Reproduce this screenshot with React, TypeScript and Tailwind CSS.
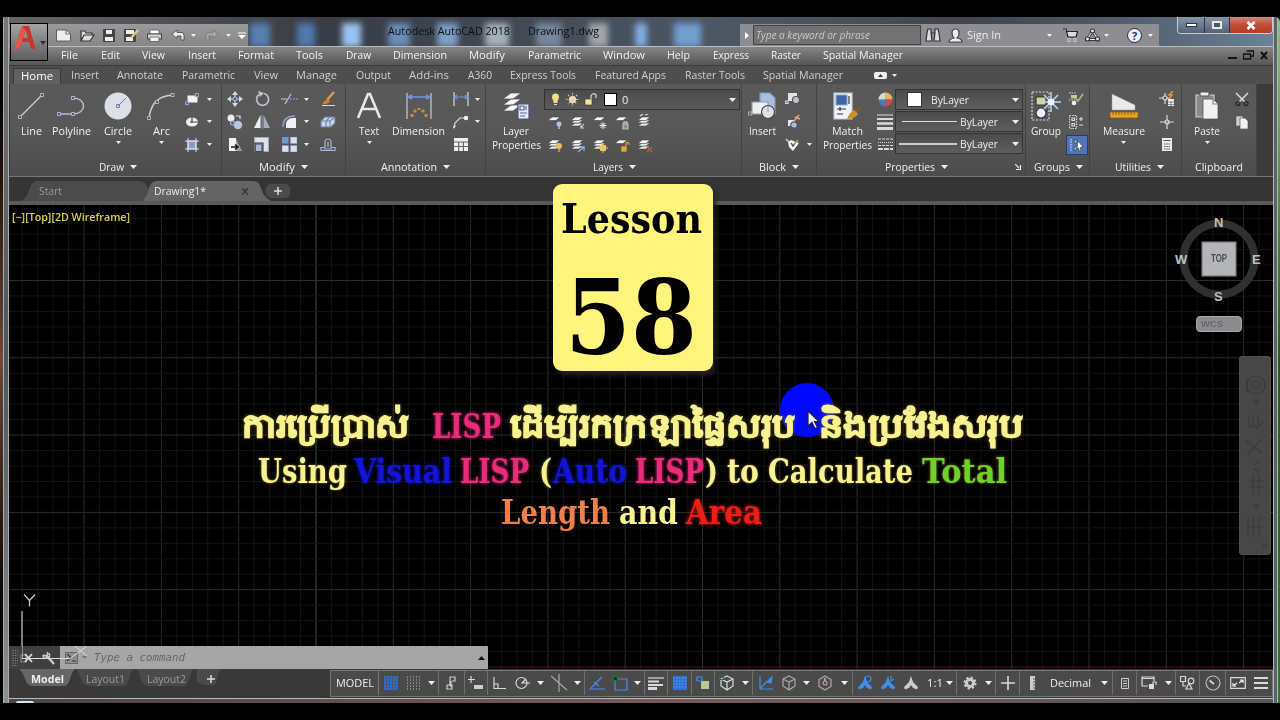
import { useLayoutEffect, useRef, useState } from "react";
import type { ReactNode } from "react";

type Box = { className?: string; children?: ReactNode };

// Squeezes or stretches one line of text to the width of its box
function Fit({ className = "", children }: Box) {
    const box = useRef<HTMLSpanElement>(null);
    const text = useRef<HTMLSpanElement>(null);
    const [scale, setScale] = useState(1);

    useLayoutEffect(() => {
        if (box.current && text.current && text.current.offsetWidth > 0) {
            setScale(box.current.clientWidth / text.current.getBoundingClientRect().width);
        }
    }, []);

    return (
        <span ref={box} className={`block shrink-0 whitespace-nowrap ${className}`}>
            <span ref={text} className="inline-block origin-left" style={{ transform: `scaleX(${scale})` }}>
                {children}
            </span>
        </span>
    );
}

function Svg({ w = 18, h = 18, children }: { w?: number; h?: number; children: ReactNode }) {
    return (
        <svg width={w} height={h} viewBox={`0 0 ${w} ${h}`} fill="none" stroke="#d8dade" strokeWidth="1.2" className="block shrink-0">
            {children}
        </svg>
    );
}

function Caret({ small = false }: { small?: boolean }) {
    return small ? (
        <Svg w={5} h={3}><path d="M0 0h5L2.5 3z" fill="#eee" stroke="none" /></Svg>
    ) : (
        <Svg w={7} h={4}><path d="M0 0h7L3.5 4z" fill="#eee" stroke="none" /></Svg>
    );
}

const menus = [
    ["File", "w-[17px]"], ["Edit", "w-[19px]"], ["View", "w-[23px]"], ["Insert", "w-[27.5px]"],
    ["Format", "w-[36px]"], ["Tools", "w-[27px]"], ["Draw", "w-[25px]"], ["Dimension", "w-[53.5px]"],
    ["Modify", "w-[36px]"], ["Parametric", "w-[53px]"], ["Window", "w-[41.5px]"], ["Help", "w-[23px]"],
    ["Express", "w-[35.5px]"], ["Raster", "w-[30px]"], ["Spatial Manager", "w-[80px]"],
];

const tabs = [
    ["Insert", "w-[27.5px]"], ["Annotate", "w-[46px]"], ["Parametric", "w-[53px]"], ["View", "w-[24px]"],
    ["Manage", "w-[40.5px]"], ["Output", "w-[35px]"], ["Add-ins", "w-[39.5px]"], ["A360", "w-[24px]"],
    ["Express Tools", "w-[66px]"], ["Featured Apps", "w-[71px]"], ["Raster Tools", "w-[60px]"],
    ["Spatial Manager", "w-[80px]"],
];

function Panel({ title, tw, className = "", children, arrow = true, launcher = false }: Box & { title: string; tw: string; arrow?: boolean; launcher?: boolean }) {
    return (
        <div className={`relative flex h-full shrink-0 flex-col border-r border-[#434343] bg-linear-to-b from-[#595959] via-[#585858] to-[#4c4c4c] ${className}`}>
            <div className="flex h-[73px] pt-[4px]">{children}</div>
            <div className={`flex h-[19px] items-center justify-center gap-[6px] text-[#f0f0f0] ${launcher ? "pr-3" : ""}`}>
                <Fit className={tw}>{title}</Fit>
                {arrow && <Caret />}
            </div>
            {launcher && (
                <span className="absolute right-[4px] bottom-[6px]">
                    <Svg w={6} h={6}><path d="M0 0l4 4M5.500 1v4.500H1" stroke="#eee" /></Svg>
                </span>
            )}
        </div>
    );
}

function Big({ className, icon, children, caret = false }: Box & { icon: ReactNode; caret?: boolean }) {
    return (
        <div className={`flex shrink-0 flex-col items-center ${className}`}>
            <div className="flex h-[36px] items-center justify-center">{icon}</div>
            <div className="flex flex-col items-center text-[#f0f0f0] leading-[14px]">{children}</div>
            {caret && <div className="mt-[3px]"><Caret small /></div>}
        </div>
    );
}

function Col({ className, children }: Box) {
    return <div className={`grid h-[68px] shrink-0 grid-rows-3 place-items-center ${className}`}>{children}</div>;
}

// Stack of sheets used by every layer tool
function Sheets({ n = 2, children }: { n?: number; children?: ReactNode }) {
    return (
        <Svg w={16} h={16}>
            {n > 2 && <path d="M5 9h8l-4 3H1z" fill="#eee" stroke="#444" strokeWidth=".6" />}
            {n > 1 && <path d="M5 6h8l-4 3H1z" fill="#eee" stroke="#444" strokeWidth=".6" />}
            <path d="M5 3h8L9 6.500H1z" fill="#f7f7f7" stroke="#444" strokeWidth=".6" />
            {children}
        </Svg>
    );
}

function DrawPanel() {
    return (
        <Panel title="Draw" tw="w-[25px]" className="w-[212px] pl-[4px]">
            <Big className="w-[34px]" icon={<Svg w={28} h={28}><path d="M3 25L25 3" stroke="#ccc" /><path d="M1.500 23.500h3v3h-3zM23.500 1.500h3v3h-3z" stroke="#a9b6dc" fill="#555" strokeWidth="1" /></Svg>}>
                <Fit className="w-[21px]">Line</Fit>
            </Big>
            <Big className="w-[46px]" icon={<Svg w={30} h={24}><path d="M17 4c14 0 14 16 0 16H3" stroke="#bbb" strokeWidth="1.500" /><path d="M15.500 2.500h3v3h-3zM15.500 18.500h3v3h-3zM1.500 18.500h3v3h-3z" stroke="#a9b6dc" fill="#555" strokeWidth="1" /></Svg>}>
                <Fit className="w-[39px]">Polyline</Fit>
            </Big>
            <Big className="w-[48px]" caret icon={
                <Svg w={28} h={28}><circle cx="14" cy="14" r="13.500" fill="#dcdfe6" stroke="none" /><path d="M14 14l8-8M12.500 12.500h3v3h-3z" stroke="#6b82b8" strokeWidth="1" /></Svg>
            }>
                <Fit className="w-[28px]">Circle</Fit>
            </Big>
            <Big className="w-[38px]" caret icon={<Svg w={28} h={28}><path d="M2 26C4 12 10 4 26 3" stroke="#ccc" strokeWidth="1.500" /><path d="M.5 24.500h3v3h-3zM8.500 8.500h3v3h-3zM24 1.500h3v3h-3z" stroke="#a9b6dc" fill="#555" strokeWidth="1" /></Svg>}>
                <Fit className="w-[17px]">Arc</Fit>
            </Big>
            <Col className="w-[24px]">
                <Svg w={14} h={12}><path d="M2.500 2.500h10v7h-10z" fill="#f2f2f2" stroke="none" /><path d="M.5 9h3v2.500h-3zM10.500.500h3v3h-3z" stroke="#8fa3d8" fill="#555" /></Svg>
                <Svg w={14} h={10}><ellipse cx="7" cy="5" rx="6" ry="4.500" fill="#eef0f4" stroke="none" /><path d="M7 0v6M5 5h8" stroke="#445" /></Svg>
                <Svg w={14} h={14}><path d="M3 3h8v8H3z" fill="#8d9cc7" stroke="#c4ccec" /><path d="M0 3h14M0 11h14M3 0v14M11 0v14" stroke="#dfe2f0" strokeWidth="1" /></Svg>
            </Col>
            <Col className="w-[10px]"><Caret small /><Caret small /><Caret small /></Col>
        </Panel>
    );
}

function ModifyPanel() {
    return (
        <Panel title="Modify" tw="w-[36px]" className="w-[124px]">
            <Col className="w-[26px]">
                <Svg w={16} h={16}><path d="M8 1v14M1 8h14" stroke="#d6dae6" /><path d="M8 0l3 4H5zM8 16l3-4H5zM0 8l4-3v6zM16 8l-4-3v6z" fill="#d6dae6" stroke="none" /><path d="M6.500 6.500h3v3h-3z" fill="#555" stroke="#8fa3d8" /></Svg>
                <Svg w={16} h={16}><circle cx="4" cy="4" r="3.500" fill="#eee" stroke="none" /><circle cx="11" cy="11" r="4.200" fill="#bcc6e2" stroke="none" /><circle cx="5.500" cy="9" r="2" stroke="#9fb0de" /><path d="M9 2h4v3" /></Svg>
                <Svg w={16} h={16}><path d="M2 1h7v13H2z" fill="#f2f2f2" stroke="none" /><path d="M9 2l6 12H9z" fill="#9b9fa8" stroke="none" /><path d="M4 10h7M8 7.500l3 2.500-3 2.500" stroke="#111" strokeWidth="1.500" /></Svg>
            </Col>
            <Col className="w-[27px]">
                <Svg w={16} h={16}><path d="M5 3.500a6 6 0 1 0 5-1" stroke="#c0c4cc" strokeWidth="1.600" /><path d="M4 0l6 2-4 4z" fill="#c0c4cc" stroke="none" /></Svg>
                <Svg w={16} h={14}><path d="M6.500 0v13H0z" fill="#f0f0f0" stroke="none" /><path d="M9.500 0v13H16z" fill="#a8acb4" stroke="none" /><path d="M8 0v14" stroke="#90a4d8" strokeWidth=".8" /></Svg>
                <Svg w={15} h={15}><path d="M.5.500h14v14H.5z" fill="#dfe3ee" stroke="#aab" /><path d="M1 6h8v8.500H1z" fill="#777d8c" stroke="#444" /><path d="M2 8h5v6H2z" fill="#aab8dc" stroke="none" /></Svg>
            </Col>
            <Col className="w-[29px]">
                <Svg w={18} h={14}><path d="M0 7h6M4 12L10 2" stroke="#b8c8f0" /><path d="M9 7h9" stroke="#8da4d6" strokeDasharray="2 1" /></Svg>
                <Svg w={16} h={14}><path d="M4 13V8q2-5 7-5h3v10z" fill="#f0f0f0" stroke="none" /><path d="M1 12Q1 1 13 1" stroke="#8da4d6" strokeWidth="1.500" /></Svg>
                <Svg w={15} h={15}><path d="M0 0h6.500v6.500H0z" fill="#7396d6" stroke="none" /><path d="M8.500 0H15v6.500H8.500zM0 8.500h6.500V15H0zM8.500 8.500H15V15H8.500z" fill="#d6e0f2" stroke="#8aa3cf" strokeWidth=".6" /></Svg>
            </Col>
            <Col className="w-[5px]"><Caret small /><Caret small /><Caret small /></Col>
            <Col className="w-[37px]">
                <Svg w={16} h={16}><path d="M14 1L7 9" stroke="#d6a35c" strokeWidth="2.200" /><path d="M8 8q-3 1-6 5 5 1 8-3z" fill="#e87b24" stroke="none" /><path d="M2 14.500h13" /></Svg>
                <Svg w={16} h={14}><path d="M1 6l4-4h10v6l-4 4H1z" fill="#cdd7ea" stroke="#6d7da0" /><path d="M1 6h9v6M10 6l5-4M6 6v6M6 6l4-4" stroke="#6d86b4" /></Svg>
                <Svg w={16} h={14}><path d="M1 12.500h14v-3h-4V4a3 3 0 0 0-6 0v5.500H1z" stroke="#a9b8d8" /><path d="M4 11h8M8 4v5" stroke="#a9b8d8" /></Svg>
            </Col>
        </Panel>
    );
}

function AnnotationPanel() {
    return (
        <Panel title="Annotation" tw="w-[56px]" className="w-[140px]">
            <Big className="w-[46px]" caret icon={<Svg w={26} h={28}><path d="M2 26L12 2h2l10 24M6 17h14" stroke="#e8e8e8" strokeWidth="2.600" /></Svg>}>
                <Fit className="w-[20px]">Text</Fit>
            </Big>
            <Big className="w-[53px]" icon={
                <Svg w={28} h={28}>
                    <path d="M2 1v26M26 1v26" stroke="#ccc" /><path d="M3 5h22M7 3L3 5l4 2M21 3l4 2-4 2" stroke="#6f93e4" strokeWidth="1.500" />
                    <path d="M7 25v-3M9 20l2-2M14 18v-2M17 18l2 2M21 22v3" stroke="#c98f2e" strokeWidth="3" />
                </Svg>
            }>
                <Fit className="w-[53px]">Dimension</Fit>
            </Big>
            <Col className="ml-[4px] w-[24px]">
                <Svg w={16} h={14}><path d="M1 0v14M15 0v14" /><path d="M1 5h14M4 3L1 5l3 2M12 3l3 2-3 2" stroke="#7896dc" /></Svg>
                <Svg w={16} h={14}><path d="M1 13l1-5 5-5h4" /><path d="M0 14l1-4 2 1z" fill="#eee" stroke="none" /><circle cx="13" cy="3" r="2.300" fill="#eee" stroke="none" /></Svg>
                <Svg w={14} h={13}><path d="M0 0h14v13H0z" fill="#eee" stroke="none" /><path d="M0 4h14M0 8.500h14M4.700 4v9M9.400 4v9" stroke="#666" /></Svg>
            </Col>
            <Col className="w-[9px]"><Caret small /><Caret small /></Col>
        </Panel>
    );
}

function LayersPanel() {
    return (
        <Panel title="Layers" tw="w-[30px]" className="w-[256px] pl-[2px]">
            <Big className="w-[56px]" icon={
                <Svg w={28} h={30}>
                    <path d="M9 14h10l-8 6H1zM9 8h10l-8 6H1zM9 2h10l-8 6H1z" fill="#f4f4f4" stroke="#555" strokeWidth=".7" />
                    <path d="M16 13h11v15H16z" fill="#e8ebf4" stroke="#47537a" /><path d="M18 15h4v4h-4zM24 15v4M18 22h7M18 25h5" stroke="#5165a0" />
                </Svg>
            }>
                <Fit className="w-[26px]">Layer</Fit>
                <Fit className="w-[49px]">Properties</Fit>
            </Big>
            <div className="flex flex-col">
                <div className="mt-[1px] flex h-[21px] w-[196px] items-center gap-[5.500px] border border-[#333] bg-linear-to-b from-[#4b4b4b] to-[#5a5a5a] pr-[3px] pl-[6px] text-[#e8e8e8]">
                    <Svg w={9} h={13}><path d="M1 4a3.500 3.500 0 1 1 7 0Q8 6 6.500 8v2h-4V8Q1 6 1 4z" fill="#f6dc86" stroke="none" /><path d="M3 11.500h3" /></Svg>
                    <Svg w={13} h={13}><circle cx="6.500" cy="6.500" r="3.500" fill="#f5ead2" stroke="none" /><path d="M6.500 0v13M0 6.500h13M2 2l9 9M11 2l-9 9" stroke="#e2c9a2" strokeDasharray="1.500 1" /></Svg>
                    <Svg w={14} h={13}><path d="M1 6h7v6H1z" fill="#efe59a" stroke="#333" strokeWidth=".6" /><path d="M7 6V3q2-4 5-1v3" /></Svg>
                    <span className="h-[13px] w-[13px] border border-black bg-white" />
                    <span className="flex-1">0</span>
                    <Caret />
                </div>
                <div className="grid h-[46px] w-[112px] grid-cols-5 grid-rows-2 place-items-center">
                    <Sheets n={1}><circle cx="12" cy="10" r="2.500" fill="#a9c5ee" stroke="none" /><path d="M12 12v3" /></Sheets>
                    <Sheets n={3}><path d="M14 10l-3 4M11 11v3h3" stroke="#b9cdf3" /></Sheets>
                    <Sheets n={1}><path d="M11 8v7M7.500 11.500h7M8.500 9l5 5M13.500 9l-5 5" stroke="#eee" strokeWidth="1" /></Sheets>
                    <Sheets n={1}><path d="M9 10h5v5H9z" fill="#8a8e98" stroke="#bbb" /><path d="M10 10V8h3v2" /></Sheets>
                    <Sheets n={3}><path d="M3 2l3-2M8 1l3-1" /></Sheets>
                    <Sheets n={3}><circle cx="12" cy="9" r="3" fill="#e9bc5c" stroke="none" /><path d="M12 11v4" stroke="#e9bc5c" /></Sheets>
                    <Sheets n={3}><path d="M8 15l6-5M10 10h4v4" stroke="#8fb0ee" strokeWidth="1.300" /></Sheets>
                    <Sheets n={3}><circle cx="11" cy="11" r="3.200" fill="#f2cf73" stroke="none" /><path d="M11 6v10M6 11h10M8 8l6 6M14 8l-6 6" stroke="#e8c364" strokeWidth="1" /></Sheets>
                    <Sheets n={1}><path d="M7 9h6v6H7z" fill="#e3a836" stroke="#6b4c10" strokeWidth=".6" /><path d="M12 9V6q3-2 3 2" stroke="#e3a836" /></Sheets>
                    <Sheets n={3}><path d="M10 10l5 5M15 10l-5 5" stroke="#b06236" strokeWidth="1.400" /></Sheets>
                </div>
            </div>
        </Panel>
    );
}

function BlockPanel() {
    return (
        <Panel title="Block" tw="w-[27px]" className="w-[75px]">
            <Big className="w-[40px]" icon={
                <Svg w={28} h={28}>
                    <path d="M12 1h10l5 5v16H12z" fill="#a8bede" stroke="#8297b8" /><path d="M4 10h16v12H4z" fill="#edeff5" stroke="#999" />
                    <circle cx="20" cy="20" r="6.500" fill="#dfe1e7" stroke="#444" /><path d="M20 14v6M.500 20h3v3h-3z" stroke="#aaa" />
                </Svg>
            }>
                <Fit className="w-[27px]">Insert</Fit>
            </Big>
            <Col className="w-[21px]">
                <Svg w={16} h={14}><path d="M3 1h9v8H3z" fill="#e2e4ea" stroke="none" /><circle cx="11" cy="8" r="3.500" fill="#bfc4ce" stroke="#555" /><path d="M.5 9h2.500v2.500H.5z" /></Svg>
                <Svg w={16} h={16}><path d="M3 6h7v6H3z" fill="#e2e4ea" stroke="none" /><circle cx="9" cy="11" r="3.200" fill="#aebfe0" stroke="#555" /><path d="M9 7l5-6M10 3l5 2" stroke="#dcb066" strokeWidth="1.600" /></Svg>
                <Svg w={16} h={14}><path d="M3 4l3-2 8 3-6 8-4-4z" fill="#f3f3f3" stroke="none" /><path d="M6 5l2 3 4-6" stroke="#444" strokeWidth="1.300" /><path d="M9 6l4-4" stroke="#c9a264" strokeWidth="1.500" /><path d="M1 1l3 3" /></Svg>
            </Col>
            <Col className="w-[12px]"><span /><span /><Caret small /></Col>
        </Panel>
    );
}

function Combo({ children, thick = false, swatch = false }: { children: string; thick?: boolean; swatch?: boolean }) {
    return (
        <div className="flex h-[21px] w-[128px] items-center border border-[#333] bg-linear-to-b from-[#4b4b4b] to-[#5e5e5e] pr-[3px] pl-[3px] text-[#eee]">
            {swatch ? (
                <span className="mr-[9px] ml-[8px] h-[15px] w-[15px] border border-[#333] bg-white" />
            ) : thick ? (
                <span className="mr-[3px] h-[2px] w-[58px] bg-[#ccc]" />
            ) : (
                <span className="mr-[3px] ml-[3px] h-px w-[55px] bg-[#ddd]" />
            )}
            <Fit className="w-[38px]">{children}</Fit>
            <span className="ml-auto"><Caret /></span>
        </div>
    );
}

function PropertiesPanel() {
    return (
        <Panel title="Properties" tw="w-[50px]" className="w-[209px] pl-[2px]" launcher>
            <Big className="w-[56px]" icon={
                <Svg w={28} h={28}>
                    <path d="M1 1h18v26H1z" fill="#f1f3f8" stroke="#c4cad8" /><path d="M3 3h11v10H3z" fill="#3b66a4" stroke="#8ea6cf" /><path d="M16 4v8M4 17h9M4 22h6M7 15v4" stroke="#333" />
                    <path d="M27 15l-6 7" stroke="#8a5a20" strokeWidth="2.500" /><path d="M21 18l4 4q-3 5-11 5 2-6 7-9z" fill="#cf8d35" stroke="none" />
                </Svg>
            }>
                <Fit className="w-[31px]">Match</Fit>
                <Fit className="w-[49px]">Properties</Fit>
            </Big>
            <Col className="w-[20px]">
                <Svg w={15} h={15}>
                    <path d="M7.500 7.500V.500a7 7 0 0 1 7 7z" fill="#f0b357" stroke="none" /><path d="M7.500 7.500h7a7 7 0 0 1-7 7z" fill="#d64a3c" stroke="none" />
                    <path d="M7.500 7.500v7a7 7 0 0 1-7-7z" fill="#4a78c8" stroke="none" /><path d="M7.500 7.500h-7a7 7 0 0 1 7-7z" fill="#cfe0c8" stroke="none" />
                </Svg>
                <Svg w={16} h={16}><path d="M0 1h16" strokeWidth="1" /><path d="M0 5h16" strokeWidth="2" /><path d="M0 9.500h16" strokeWidth="2.500" /><path d="M0 14.500h16" strokeWidth="3" /></Svg>
                <Svg w={15} h={13}><path d="M0 1h15M0 7.500h15" strokeDasharray="3 1" /><path d="M0 4.500h15" strokeDasharray="1 1" /><path d="M0 11h15" strokeDasharray="5 1" strokeWidth="2" /></Svg>
            </Col>
            <div className="flex flex-col gap-[1px] pt-[1px]">
                <Combo swatch>ByLayer</Combo>
                <Combo>ByLayer</Combo>
                <Combo thick>ByLayer</Combo>
            </div>
        </Panel>
    );
}

function GroupsPanel() {
    return (
        <Panel title="Groups" tw="w-[36px]" className="w-[64px] pl-[1px]">
            <Big className="w-[38px]" icon={
                <Svg w={30} h={30}>
                    <path d="M1 1h17v28H1z" strokeDasharray="2 1.500" /><path d="M5 6h10v8H5z" fill="#d4d49a" stroke="#333" /><circle cx="10" cy="22" r="5" fill="#eef" stroke="#333" />
                    <path d="M20 1v20M10 11h20M13 4l14 14M27 4L13 18" stroke="#b9d6f6" strokeWidth="1.500" /><circle cx="20" cy="11" r="3.500" fill="#e6f3ff" stroke="none" />
                </Svg>
            }>
                <Fit className="w-[30px]">Group</Fit>
            </Big>
            <Col className="w-[23px]">
                <Svg w={15} h={14}><path d="M0 1h7M0 8h7" strokeDasharray="1.500 1" /><path d="M2 3h6v3.500H2z" fill="#c9cd94" stroke="none" /><path d="M7 7l2 2 5-7" stroke="#b9bc7a" strokeWidth="1.500" /><circle cx="5" cy="11" r="2.300" fill="#eee" stroke="none" /></Svg>
                <Svg w={15} h={14}><path d="M.5.500h7v13h-7z" strokeDasharray="1.500 1" /><path d="M3 3h2.500v2.500H3zM3 8.500h2.500V11H3z" /><path d="M10 4h4M12 2v4M10 10h4" /></Svg>
                <span className="grid h-[20px] w-[22px] place-items-center border border-[#233d78] bg-[#5275b5]">
                    <Svg w={14} h={14}><path d="M1 1v12" strokeDasharray="1.500 1" /><path d="M4 2h3v3H4zM4 9h3v3H4z" fill="#9ed0b0" stroke="#244" strokeWidth=".7" /><path d="M8 3l5 6-3 .500 1 3-1.500.500-1-3L7 11z" fill="#fff" stroke="#222" strokeWidth=".5" /></Svg>
                </span>
            </Col>
        </Panel>
    );
}

function UtilitiesPanel() {
    return (
        <Panel title="Utilities" tw="w-[36px]" className="w-[92px] pl-[7px]">
            <Big className="w-[53px]" caret icon={
                <Svg w={30} h={28}>
                    <path d="M3 2l23 11v5H3z" fill="#eaeaec" stroke="#999" strokeWidth=".5" /><path d="M1 20h28v6H1z" fill="#e2a22c" stroke="#80570e" strokeWidth=".7" />
                    <path d="M4 20v3M7 20v3M10 20v3M13 20v3M16 20v3M19 20v3M22 20v3M25 20v3" stroke="#80570e" strokeWidth=".8" />
                </Svg>
            }>
                <Fit className="w-[42px]">Measure</Fit>
            </Big>
            <Col className="ml-[5px] w-[24px]">
                <Svg w={16} h={16}><path d="M6 2v11M0 7h11" /><circle cx="6" cy="7" r="2" fill="#555" /><path d="M14 0l-4 4h3l-3 4" stroke="#e89538" strokeWidth="1.500" /><path d="M9 8h6v7H9z" fill="#eee" stroke="none" /><path d="M9 11h6M9 13.500h6M12 10v5" stroke="#666" strokeWidth=".7" /></Svg>
                <Svg w={14} h={14}><path d="M7 0v14M0 7h14" /><circle cx="7" cy="7" r="2" fill="#888" stroke="#ddd" /></Svg>
                <Svg w={10} h={13}><path d="M0 0h10v13H0z" fill="#ececec" stroke="none" /><path d="M1.500 2.500h7" stroke="#555" /><path d="M2 6h6M2 8.500h6M2 11h6" stroke="#555" strokeDasharray="1.500 .8" /></Svg>
            </Col>
        </Panel>
    );
}

function ClipboardPanel() {
    return (
        <Panel title="Clipboard" tw="w-[48px]" className="w-[75px]" arrow={false}>
            <Big className="ml-[3px] w-[44px]" caret icon={
                <Svg w={26} h={30}>
                    <path d="M2 4h18v22H2z" fill="#8a8a8a" stroke="#ccc" /><path d="M6 1h9v4H6z" fill="#eee" stroke="#555" />
                    <path d="M9 8h10l5 5v15H9z" fill="#f2f2f2" stroke="#555" strokeWidth=".8" /><path d="M19 8v5h5" stroke="#888" />
                </Svg>
            }>
                <Fit className="w-[26px]">Paste</Fit>
            </Big>
            <Col className="ml-[2px] w-[22px]">
                <Svg w={14} h={14}><path d="M1 1l9 9M13 1l-9 9" stroke="#ddd" strokeWidth="1.500" /><circle cx="3" cy="11.500" r="2" stroke="#222" /><circle cx="11" cy="11.500" r="2" stroke="#222" /></Svg>
                <Svg w={14} h={14}><path d="M1 1h7v10H1z" fill="#cfcfcf" stroke="#444" strokeWidth=".5" /><path d="M5 3h5l3 3v8H5z" fill="#f2f2f2" stroke="#444" strokeWidth=".6" /></Svg>
                <span />
            </Col>
        </Panel>
    );
}

function TitleBar() {
    return (
        <div className="relative flex h-[29px] items-end bg-linear-to-r from-[#666] via-[#383c45] via-25% to-[#6b8298]">
            {/* desktop showing through the glass */}
            <div className="absolute inset-x-0 top-0 h-[29px] overflow-hidden bg-linear-to-r from-transparent from-55% via-[#40444c] via-75% to-transparent">
                <div className="flex gap-[27px] pt-[6px] pl-[241px] blur-[3px]">
                    <span className="h-6 w-[20px] bg-[#5680b0]" />
                    <span className="h-6 w-[18px] bg-[#4f79ae]" />
                    <span className="h-6 w-[19px] bg-[#9cc3f3]" />
                    <span className="h-6 w-[22px] bg-[#6b8db9]" />
                    <span className="h-6 w-[21px] bg-[#7f9fc6]" />
                    <span className="h-6 w-[24px] bg-[#a5b1b9]" />
                    <span className="h-6 w-[26px] bg-[#77879c]" />
                    <span className="h-6 w-[19px] bg-[#a3a7ab]" />
                    <span className="h-6 w-[12px] bg-[#82aee4]" />
                    <span className="h-6 w-[27px] bg-[#719ed0]" />
                </div>
            </div>
            <div className="relative flex h-[22px] w-[239px] items-center gap-[8.500px] bg-linear-to-b from-[#9a9a9a] to-[#878787] pl-[47px]">
                <Svg w={15} h={13}><path d="M.5 1h10l4 4v7H.5z" fill="#eee" stroke="#444" strokeWidth=".8" /><path d="M10 1v4h4" stroke="#777" /></Svg>
                <Svg w={15} h={13}><path d="M1 12V2h4l1 2h6v2M1 12l3-6h10l-4 6z" fill="#ddd" stroke="#333" /></Svg>
                <Svg w={12} h={13}><path d="M0 0h12v13H0z" fill="#444" stroke="none" /><path d="M3 1h6v4H3zM2 8h8v4H2z" fill="#eee" stroke="none" /></Svg>
                <Svg w={15} h={13}><path d="M0 0h12v13H0z" fill="#444" stroke="none" /><path d="M2 1h8v4H2zM2 8h7v4H2z" fill="#eee" stroke="none" /><path d="M14 1L7 9" stroke="#e2c67e" strokeWidth="2.500" /></Svg>
                <Svg w={15} h={13}><path d="M3 1h9v4H3z" fill="#fff" stroke="#555" strokeWidth=".8" /><path d="M.5 5h14v5H.5z" fill="#ddd" stroke="#444" /><path d="M3 8h9v4.500H3z" fill="#f4f4f4" stroke="#555" strokeWidth=".8" /></Svg>
                <Svg w={14} h={12}><path d="M1 5l5-4v2.500h5q2 0 2 3V11h-3V7H6v2.500z" fill="#ececec" stroke="#444" strokeWidth=".8" /></Svg>
                <span className="-ml-[2px]"><Caret small /></span>
                <Svg w={14} h={12}><path d="M13 5L8 1v2.500H3q-2 0-2 3V11h3V7h4v2.500z" fill="#a5a5a5" stroke="#777" strokeWidth=".8" /></Svg>
                <span className="-ml-[1px]"><Caret small /></span>
                <span className="-ml-[2px]"><Svg w={8} h={7}><path d="M0 1h8" stroke="#fff" /><path d="M0 3h8L4 7z" fill="#fff" stroke="none" /></Svg></span>
            </div>
            <div className="relative flex h-[29px] w-[492px] items-center pb-[2px] pl-[140px] text-[#0c0e14]">
                <Fit className="w-[122px]">Autodesk AutoCAD 2018</Fit>
                <Fit className="ml-[17.500px] w-[71px]">Drawing1.dwg</Fit>
            </div>
            <div className="relative flex h-[22px] w-[419px] items-center bg-[#8d8d92] text-[#eee]">
                <span className="grid w-[13px] place-items-center"><Svg w={4} h={7}><path d="M0 0v7l4-3.500z" fill="#fff" stroke="none" /></Svg></span>
                <div className="flex h-[20px] w-[168px] items-center border border-[#444] bg-[#727272] pl-[2px] text-[#c8c8c8] italic">
                    <Fit className="w-[114px]">Type a keyword or phrase</Fit>
                </div>
                <span className="ml-[4px]"><Svg w={16} h={14}><path d="M2 5l1-4h3v4l1 8H1zM14 5l-1-4h-3v4L9 13h6zM6 5h4" fill="#ddd" stroke="#333" /></Svg></span>
                <span className="ml-[7px]"><Svg w={15} h={15}><path d="M4 5q0-4 3.500-4T11 5q0 3-2 5 5 1 5 4H1q0-3 5-4-2-2-2-5z" fill="#eee" stroke="#444" /></Svg></span>
                <Fit className="ml-[4px] w-[34px]">Sign In</Fit>
                <span className="ml-[46px]"><Caret small /></span>
                <span className="ml-[11px]"><Svg w={15} h={14}><path d="M0 1h3l2 8h8l1.500-5.500H4" fill="#ddd" stroke="#222" /><circle cx="6" cy="12" r="1.300" fill="#222" /><circle cx="12" cy="12" r="1.300" fill="#222" /></Svg></span>
                <span className="ml-[7px]"><Svg w={15} h={14}><path d="M7.500 3L2 11.500h11z" stroke="#222" strokeWidth="2.500" /><path d="M7.500 3L2 11.500h11z" stroke="#eee" /><circle cx="7.500" cy="3" r="2" fill="#eee" stroke="#333" /><circle cx="2.500" cy="11" r="2" fill="#eee" stroke="#333" /><circle cx="12.500" cy="11" r="2" fill="#eee" stroke="#333" /></Svg></span>
                <span className="ml-[4px]"><Caret small /></span>
                <span className="ml-[18px] grid size-[15px] place-items-center rounded-full border border-[#223] bg-[#eef] text-[11px] font-bold text-[#27365f]">?</span>
                <span className="ml-[6px]"><Caret small /></span>
            </div>
            {/* window buttons */}
            <div className="absolute top-0 right-0 flex h-[17px] w-[96px] overflow-hidden rounded-b-[4px] border border-t-0 border-[#c9ccd2]">
                <span className="grid w-[27px] place-items-center border-r border-[#333] bg-linear-to-b from-[#8796a8] to-[#52637a]"><span className="h-[4px] w-[11px] border border-[#333] bg-white" /></span>
                <span className="grid w-[25px] place-items-center border-r border-[#333] bg-linear-to-b from-[#8796a8] to-[#52637a]"><span className="h-[8px] w-[10px] border-2 border-[#e8e8e8] bg-[#555]" /></span>
                <span className="grid flex-1 place-items-center bg-linear-to-b from-[#d08a7c] via-[#c34a33] to-[#b53d28]"><Svg w={10} h={9}><path d="M1.500 1l7 7M8.500 1l-7 7" stroke="#fff" strokeWidth="2.600" /></Svg></span>
            </div>
            {/* application button */}
            <div className="absolute top-[6px] left-[1px] z-10 flex h-[38px] w-[38px] items-start border border-black bg-linear-to-b from-[#a4a4a4] to-[#5f5f5f] pt-px pl-[3px]">
                <Svg w={24} h={27}>
                    <path d="M0 25L8 1h7l7 24-5-2-2-6H8l-3 6zM9 13h5l-2.500-8z" fill="#c8352d" fillRule="evenodd" stroke="none" />
                    <path d="M0 25L8 1l3.500 4L9 13l-1 4-3 6z" fill="#e4574b" stroke="none" />
                </Svg>
                <span className="mt-[16px] ml-[2px]"><Svg w={6} h={4}><path d="M0 0h6L3 4z" fill="#333" stroke="none" /></Svg></span>
            </div>
        </div>
    );
}

function MenuBar() {
    return (
        <div className="flex h-[19px] items-center gap-[22.500px] border-t border-[#bbb] bg-linear-to-b from-[#858585] to-[#565656] pr-[5px] pb-[2px] pl-[52px] text-[#f2f2f2]">
            {menus.map(([name, w], i) => <Fit key={i} className={w}>{name}</Fit>)}
            <span className="ml-auto flex items-center gap-[6px]">
                <Svg w={9} h={10}><path d="M0 8h9" stroke="#111" strokeWidth="2" /></Svg>
                <Svg w={11} h={10}><path d="M3.500 1h7v5h-3M.500 4h7v5h-7z" stroke="#111" strokeWidth="1.300" /></Svg>
                <Svg w={8} h={9}><path d="M1 1l6 7M7 1L1 8" stroke="#111" strokeWidth="2" /></Svg>
            </span>
        </div>
    );
}

function TabBar() {
    return (
        <div className="flex h-[19px] items-center gap-[18.700px] border-t border-[#3c3c3c] bg-[#4e4e4e] pl-[12px] text-[#cfcfcf]">
            <span className="-mx-[8px] mt-[2px] flex h-[17px] items-center border border-b-0 border-[#3a3a3a] bg-[#606060] px-[7px] pb-[2px] text-white">
                <Fit className="w-[31.500px]">Home</Fit>
            </span>
            {tabs.map(([name, w], i) => <Fit key={i} className={w}>{name}</Fit>)}
            <span className="ml-[12px] flex items-center gap-[5px]">
                <span className="grid h-[7px] w-[13px] place-items-center rounded-[2px] bg-[#eee]"><Svg w={5} h={3}><path d="M0 3h5L2.500 0z" fill="#333" stroke="none" /></Svg></span>
                <Caret small />
            </span>
        </div>
    );
}

function FileTabs() {
    return (
        <div className="relative flex h-[29px] items-end border-t border-[#777] border-b-[4px] border-b-[#5a5a5a] bg-[#353535] text-[#9a9a9a]">
            <div className="absolute bottom-0 left-[12px]">
                <Svg w={260} h={21}>
                    <path d="M0 21Q6 18 9 8Q11 1 17 1H118Q124 1 127 8L132 21z" fill="#4b4b4b" stroke="none" />
                    <path d="M122 21Q126 16 128 8Q130 1 136 1H232Q238 1 240 8Q243 18 250 21z" fill="#646464" stroke="none" />
                </Svg>
            </div>
            <div className="relative flex h-[20px] items-center">
                <Fit className="ml-[30px] w-[23px]">Start</Fit>
                <Fit className="ml-[92px] w-[52px] text-[#eee]">Drawing1*</Fit>
                <span className="ml-[35px]"><Svg w={8} h={7}><path d="M1 0l6 7M7 0L1 7" stroke="#3a3a3a" strokeWidth="1.500" /></Svg></span>
                <span className="ml-[17px] grid h-[14px] w-[24px] place-items-center rounded-[5px] bg-[#4b4b4b]"><Svg w={8} h={8}><path d="M4 0v8M0 4h8" stroke="#ddd" strokeWidth="1.500" /></Svg></span>
            </div>
        </div>
    );
}

function Grid() {
    const step = 15.46;
    const cols = Array.from({ length: 84 }, (_, i) => i - 20);
    const rows = Array.from({ length: 31 }, (_, i) => i);
    return (
        <svg width="1264" height="464" viewBox="9 205 1264 464" className="absolute inset-0">
            <g strokeWidth="1">
                {cols.map((i) => (
                    <path key={i} d={`M${316 + i * step} 205V669`} stroke={i === 0 ? "#34503a" : i % 5 === 0 ? "#2b2d2b" : "#121312"} />
                ))}
                {rows.map((i) => (
                    <path key={i} d={`M9 ${667 - i * step}H1273`} stroke={i === 0 ? "#4c1a1a" : i % 5 === 0 ? "#2b2d2b" : "#121312"} />
                ))}
            </g>
            {/* UCS icon */}
            <g fill="none" stroke="#c8c8c8" strokeWidth="1.200">
                <path d="M22 611v47M24 594.500l5.500 6 5.500-6M29.500 600.500v6" />
            </g>
        </svg>
    );
}

function ViewCube() {
    return (
        <div className="absolute top-[9px] right-[9px] flex w-[90px] flex-col items-center">
            <div className="relative size-[90px] font-['Liberation_Sans'] text-[13px] font-bold text-[#c0c0c0]">
                <Svg w={90} h={90}>
                    <circle cx="45" cy="45" r="35.500" stroke="#303030" strokeWidth="8" />
                    <rect x="28" y="28" width="34" height="34" fill="#b3b5b8" stroke="#777" />
                </Svg>
                <span className="absolute top-[2px] left-[40px] leading-none">N</span>
                <span className="absolute top-[39px] left-[1px] leading-none">W</span>
                <span className="absolute top-[39px] left-[78px] leading-none">E</span>
                <span className="absolute top-[76px] left-[40px] leading-none">S</span>
                <span className="absolute top-[40px] left-[37px] text-[10px] leading-[10px] text-[#4c4c4c]"><Fit className="w-[16px]">TOP</Fit></span>
            </div>
            <div className="mt-[12px] h-[16px] w-[46px] rounded-[4px] border border-[#aaa] bg-[#8b8b90] pl-[4px] font-['Liberation_Sans'] text-[9px] leading-[14px] font-bold text-[#66666b]">
                <Fit className="w-[22px]">WCS</Fit>
            </div>
        </div>
    );
}

function NavBar() {
    return (
        <div className="absolute top-[151px] right-[2px] flex h-[199px] w-[32px] justify-center rounded-[3px] border border-[#505050] bg-[#474747]">
            <Svg w={28} h={196}>
                <g stroke="#3b3b3b">
                    <circle cx="15" cy="28" r="9" /><circle cx="15" cy="28" r="4" /><path d="M14 44h4l-2 3zM6 21v14" />
                    <path d="M8 60v10M12 58v12M17 58v12M8 70h9M22 64l-6 8M5 84l16 12M20 82L6 98M12 108l8-4M14 112h4l-2 3z" />
                    <path d="M8 124h15M8 130h15M12 118v20M18 118v20M14 148h4l-2 3zM7 160v20M12 160v20M18 160v20M7 170h16" />
                    <path d="M21 188h5M21 191h5" />
                </g>
            </Svg>
        </div>
    );
}

function CommandLine() {
    return (
        <div className="absolute bottom-0 left-0 flex h-[23px] w-[479px] text-[#555]">
            <div className="relative flex w-[51px] items-center gap-[5px] bg-[#404040] pl-[3px]">
                <Svg w={6} h={16}><path d="M1 0v16M3.500 0v16M6 0v16" stroke="#888" strokeDasharray="1 1.500" /></Svg>
                <span className="-ml-[3px]"><Svg w={14} h={12}><path d="M1 3h5v7H1z" stroke="#888" /><path d="M5 2l7 8M12 2l-7 8" stroke="#ddd" strokeWidth="1.800" /></Svg></span>
                <span className="ml-[3px]"><Svg w={14} h={14}><path d="M4 4l8 9" stroke="#ccc" strokeWidth="2.400" /><path d="M1 4q0 4 4 3t2-5M1 4l3 1 2-2-1-2" stroke="#ccc" strokeWidth="1.400" /></Svg></span>
            </div>
            <div className="relative flex flex-1 items-center bg-[#a6a6a6] pr-[3px] pl-[5px]">
                <span className="grid h-[12px] w-[13px] place-items-center border border-[#666] bg-[#8e8e8e]"><Svg w={9} h={8}><path d="M0 0l4 3.500L0 7M5 7h4" stroke="#333" /></Svg></span>
                <span className="ml-[4px] opacity-40"><Svg w={5} h={3}><path d="M0 0h5L2.500 3z" fill="#222" stroke="none" /></Svg></span>
                <Fit className="ml-[7px] w-[91px] font-['DejaVu_Sans_Mono'] text-[11px] text-[#666] italic">Type a command</Fit>
                <span className="ml-auto"><Svg w={7} h={4}><path d="M0 4h7L3.500 0z" fill="#111" stroke="none" /></Svg></span>
            </div>
            <div className="absolute top-0 left-[13px]">
                <Svg w={68} h={16}><path d="M0 0v12.500h48M53 0l12 10M65 0l-17 12.500" stroke="#ddd" strokeWidth="1" /></Svg>
            </div>
        </div>
    );
}

const glow = "[text-shadow:0_0_4px_currentColor]";

function Headline() {
    return (
        <div className="absolute top-[194px] left-[231px] flex w-[786px] flex-col font-['DejaVu_Serif','DejaVu_Serif_Condensed',serif] text-[33px] font-bold text-[#f8f291]">
            <div className="flex h-[53px] w-full items-center pl-[2px] leading-[54px] [text-shadow:0_0_4px_#8a7c28]">
                <Fit className="w-[167px] [-webkit-text-stroke:1.2px_#f8f291]">ការប្រើប្រាស់</Fit>
                <Fit className={`mt-[2px] ml-[23px] w-[69px] text-[#ea2c7a] ${glow}`}>LISP</Fit>
                <Fit className="ml-[9px] w-[285px] [-webkit-text-stroke:1.2px_#f8f291]">ដើម្បីរកក្រឡាផ្ទៃសរុប</Fit>
                <Fit className="ml-[24px] w-[204px] [-webkit-text-stroke:1.2px_#f8f291]">និងប្រវែងសរុប</Fit>
            </div>
            <div className="flex h-[40px] items-center pl-[18px] leading-[40px] [text-shadow:0_0_3px_#8a7c28]">
                <Fit className="w-[89px]">Using</Fit>
                <Fit className={`ml-[7px] w-[98px] text-[#1414d8] ${glow}`}>Visual</Fit>
                <Fit className={`ml-[8px] w-[69px] text-[#ea2c7a] ${glow}`}>LISP</Fit>
                <Fit className="ml-[10px] w-[13px]">(</Fit>
                <Fit className={`ml-[1px] w-[74px] text-[#1414d8] ${glow}`}>Auto</Fit>
                <Fit className={`ml-[8px] w-[69px] text-[#ea2c7a] ${glow}`}>LISP</Fit>
                <Fit className="ml-[1px] w-[13px]">)</Fit>
                <Fit className="ml-[9px] w-[32px]">to</Fit>
                <Fit className="ml-[9px] w-[145px]">Calculate</Fit>
                <Fit className="ml-[9px] w-[85px] text-[#6fd22a]">Total</Fit>
            </div>
            <div className="flex h-[41px] items-center pl-[261px] leading-[41px]">
                <Fit className="w-[109px] text-[#f07f4a]">Length</Fit>
                <Fit className="ml-[9px] w-[59px]">and</Fit>
                <Fit className={`ml-[8px] w-[76px] text-[#ea1f16] ${glow}`}>Area</Fit>
            </div>
        </div>
    );
}

function LessonCard() {
    return (
        <div className="absolute -top-[21px] left-[544px] flex h-[187px] w-[160px] flex-col items-center rounded-[9px] bg-[#fff57d] font-['DejaVu_Serif','DejaVu_Serif_Condensed',serif] font-bold text-black shadow-[3px_4px_5px_#222]">
            <Fit className="mt-[9px] -ml-[4px] w-[141px] text-[41px] leading-[52px]">Lesson</Fit>
            <Fit className="mt-[19px] -ml-[4px] w-[132px] text-[102px] leading-[108px]">58</Fit>
        </div>
    );
}

function Canvas() {
    return (
        <div className="relative h-[464px] bg-black">
            <Grid />
            <div className="absolute top-[5px] left-[3px] text-[#d9cf4d]"><Fit className="w-[118px] leading-[13px] font-semibold">[−][Top][2D Wireframe]</Fit></div>
            <span className="absolute top-[178px] left-[771px] size-[54px] rounded-full bg-[#0008ff]" />
            <Headline />
            <span className="absolute top-[205px] left-[798px]"><Svg w={13} h={20}><path d="M1 1v15l4-3.500 3 6 2.500-1-3-6H12z" fill="#f4f4f4" stroke="#223" /></Svg></span>
            <LessonCard />
            <ViewCube />
            <NavBar />
            <CommandLine />
        </div>
    );
}

const blue = "#3f8ff0";
const caret = <Caret />;
const person = (color: string, extra?: ReactNode) => (
    <Svg w={16} h={16}><path d="M8 1l2 6 5 5-1 2.500-4-1.500-2-3-2 3-4 1.500L1 12l5-5z" fill={color} stroke="none" />{extra}</Svg>
);
const cube = (color: string, extra?: ReactNode) => (
    <Svg w={16} h={16}><path d="M8 1l6 3v7l-6 4-6-4V4zM2 4l6 3 6-3M8 7v8" stroke={color} />{extra}</Svg>
);

// [width, content, has a divider on its right]
const status: [string, ReactNode, boolean?][] = [
    ["w-[24px]", <Svg w={14} h={14}><path d="M1 0v14M4 0v14M7 0v14M10 0v14M13 0v14M0 1h14M0 4h14M0 7h14M0 10h14M0 13h14" stroke="#2f74e0" /></Svg>],
    ["w-[22px]", <Svg w={14} h={14}><path d="M0 1h14M0 4h14M0 7h14M0 10h14M0 13h14" stroke="#bbb" strokeDasharray="1 2" /></Svg>],
    ["w-[14px]", caret, true],
    ["w-[26px]", <Svg w={12} h={14}><path d="M4 10V1h5v4H6M5 5v6M1 9h5v4H1z" stroke="#ccc" /></Svg>, true],
    ["w-[23px]", <Svg w={16} h={14}><path d="M3 0v7M0 3.500h7" /><path d="M6 9h9v4H6z" fill="#ccc" stroke="none" /></Svg>, true],
    ["w-[23px]", <Svg w={13} h={13}><path d="M1 0v11.500h12M1 7h4v4" /></Svg>],
    ["w-[22px]", <Svg w={15} h={14}><circle cx="6.500" cy="7" r="5.500" /><path d="M6 7h9M7 7l4-4" /></Svg>],
    ["w-[15px]", caret],
    ["w-[22px]", <Svg w={17} h={18}><path d="M8 0v18M0 2l16 14" stroke="#aaa" /></Svg>],
    ["w-[15px]", caret, true],
    ["w-[24px]", <Svg w={16} h={14}><path d="M0 13h16M2 12L13 1M5 6l5 4" stroke={blue} /></Svg>],
    ["w-[22px]", <Svg w={15} h={15}><path d="M2 3h12v11H2z" stroke={blue} /><path d="M.5.500h4v4h-4z" stroke="#1b7a36" fill="#133" /></Svg>],
    ["w-[14px]", caret, true],
    ["w-[23px]", <Svg w={16} h={13}><path d="M0 1h16" /><path d="M0 4.500h11" strokeWidth="2" /><path d="M0 8h15" strokeWidth="2" /><path d="M0 11.500h9" strokeWidth="3" /></Svg>, true],
    ["w-[24px]", <Svg w={14} h={14}><path d="M0 0h14v14H0z" fill="#2f6fd6" stroke="none" /><path d="M0 2h14M0 5h14M0 8h14M0 11h14" stroke="#6ba4ee" strokeDasharray="1.500 1.500" /></Svg>, true],
    ["w-[23px]", <Svg w={14} h={14}><path d="M5 5h8v8H5z" fill="#b9c795" stroke="none" /><path d="M1 1h5v4H1z" stroke={blue} /></Svg>, true],
    ["w-[24px]", cube("#ddd", <path d="M.5.500h4v4h-4z" stroke="#1b7a36" />)],
    ["w-[14px]", caret, true],
    ["w-[26px]", <Svg w={16} h={16}><path d="M2 1v13h13M2 14L9 6M2 14h9" stroke={blue} /><path d="M14 2L9 7l4 1z" fill={blue} stroke={blue} /></Svg>],
    ["w-[20px]", cube("#aaa")],
    ["w-[15px]", caret],
    ["w-[22px]", <Svg w={14} h={16}><path d="M7 1l6 3.500v7L7 15l-6-3.500v-7z" stroke="#aaa" /><circle cx="7" cy="8" r="2" stroke="#c99" /><path d="M7 3v3" /></Svg>],
    ["w-[17px]", caret, true],
    ["w-[24px]", person(blue, <circle cx="11" cy="4" r="3" stroke={blue} />)],
    ["w-[22px]", person(blue, <path d="M11 1v5l3-2" stroke={blue} />)],
    ["w-[23px]", person("#ccc")],
    ["w-[21px]", <Fit className="ml-1 w-[16px]">1:1</Fit>],
    ["w-[14px]", caret, true],
    ["w-[25px]", <Svg w={14} h={14}><circle cx="7" cy="7" r="3.500" stroke="#ccc" strokeWidth="3" /><circle cx="7" cy="7" r="5.500" stroke="#ccc" strokeWidth="2" strokeDasharray="2.200 2.100" /></Svg>],
    ["w-[14px]", caret, true],
    ["w-[24px]", <Svg w={14} h={14}><path d="M7 0v14M0 7h14" strokeWidth="1.600" /></Svg>, true],
    ["w-[25px]", <Svg w={6} h={14}><path d="M0 0h5v14H0z" fill="#ccc" stroke="none" /><path d="M3 3h3M3 6h3M3 9h3M3 12h3" stroke="#555" /></Svg>],
    ["w-[51px]", <Fit className="w-[41px]">Decimal</Fit>],
    ["w-[17px]", caret, true],
    ["w-[24px]", <Svg w={8} h={11}><path d="M.5.500h7v10h-7zM2 3h4M2 5.500h4M2 8h4" stroke="#ccc" strokeWidth="1" /></Svg>, true],
    ["w-[24px]", <Svg w={16} h={14}><path d="M13 5V1H1v9h6M1 2.500h12" /><path d="M8 8h5v5H8z" fill="#ddd" stroke="none" /><path d="M12 8V6h3v3" /></Svg>],
    ["w-[15px]", caret, true],
    ["w-[24px]", <Svg w={15} h={14}><path d="M.5.500h5v5h-5zM6 13l3-6 3 6z" /><circle cx="11" cy="5" r="2.800" /><path d="M3 6v4h3" /></Svg>, true],
    ["w-[26px]", <Svg w={16} h={16}><circle cx="8" cy="8" r="7" stroke="#bbb" /><path d="M4.500 5.500L9 9" strokeWidth="1.600" /></Svg>, true],
    ["w-[24px]", <Svg w={16} h={12}><path d="M.7.700h14.600v10.600H.7z" /><path d="M3 9l4-3M3 6v3h3M13 3L9 6M13 6V3h-3" stroke="#eee" /></Svg>],
    ["w-[22px]", <Svg w={14} h={12}><path d="M0 1h14M0 6h14M0 11h14" strokeWidth="1.800" /></Svg>],
];

function StatusBar() {
    return (
        <div className="flex h-[29px] bg-[#393939] text-[#eee]">
            <div className="relative flex h-[19px] w-[321px] shrink-0 items-center">
                <div className="absolute top-0 left-[10px]">
                    <Svg w={204} h={18}>
                        <path d="M0 0h56Q53 2 51 10T44 17H14Q8 17 6 10T0 0z" fill="#666" stroke="none" />
                        <path d="M57 0h58q-3 2-5 10t-7 7H70q-6 0-8-7T57 0zM117 0h58q-3 2-5 10t-7 7h-33q-6 0-8-7T117 0zM178 0h24q-3 2-4 10t-6 6h-6q-4 0-8-3z" fill="#4a4a4a" stroke="none" />
                    </Svg>
                </div>
                <Fit className="relative ml-[22px] w-[33px] font-bold">Model</Fit>
                <Fit className="relative ml-[22px] w-[39px] text-[#999]">Layout1</Fit>
                <Fit className="relative ml-[22px] w-[39px] text-[#999]">Layout2</Fit>
                <span className="relative ml-[21px]"><Svg w={8} h={8}><path d="M4 0v8M0 4h8" stroke="#ddd" strokeWidth="1.500" /></Svg></span>
            </div>
            <div className="mt-px flex h-[27px] border border-[#777] bg-[#4a4a4a] pb-px">
                <div className="flex w-[48px] shrink-0 items-center justify-center border-r border-[#777]">
                    <Fit className="w-[38px]">MODEL</Fit>
                </div>
                {status.map(([w, icon, divider], i) => (
                    <div key={i} className={`flex shrink-0 items-center justify-center ${w} ${divider ? "border-r border-[#6e6e6e]" : ""}`}>{icon}</div>
                ))}
            </div>
        </div>
    );
}

export default function App() {
    return (
        <div className="h-[720px] w-[1280px] overflow-hidden bg-black pt-[17px] font-['Open_Sans','Noto_Sans',sans-serif] text-[11px] leading-[14px]">
            <div className="flex h-[686px] overflow-hidden rounded-t-[5px]">
                <div className="w-[3px] shrink-0 bg-linear-to-b from-black via-[#6b4a38] to-black" />
                <div className="w-[6px] shrink-0 border-x border-[#a9adb2] bg-linear-to-b from-[#777] via-[#505358] to-[#8b8f94]" />
                <div className="flex w-[1264px] shrink-0 flex-col">
                    <TitleBar />
                    <MenuBar />
                    <TabBar />
                    <div className="flex h-[92px] bg-[#3b3b3b] pl-px">
                        <DrawPanel />
                        <ModifyPanel />
                        <AnnotationPanel />
                        <LayersPanel />
                        <BlockPanel />
                        <PropertiesPanel />
                        <GroupsPanel />
                        <UtilitiesPanel />
                        <ClipboardPanel />
                    </div>
                    <FileTabs />
                    <Canvas />
                    <StatusBar />
                    <div className="h-[5px] border-t border-[#b9b9b9] bg-linear-to-r from-[#4a4448] via-[#77595a] to-[#55565a]" />
                </div>
                <div className="w-[5px] shrink-0 border-x border-[#b5b8bb] bg-[#5d6266]" />
                <div className="flex-1 bg-linear-to-b from-[#7fc77c] via-[#1d5d20] to-[#2b7a2d]" />
            </div>
            <div className="flex pl-[16px]"><span className="-mt-[2px] h-[2px] w-[18px] rounded-t-full bg-[#cfe4ee]" /></div>
        </div>
    );
}
